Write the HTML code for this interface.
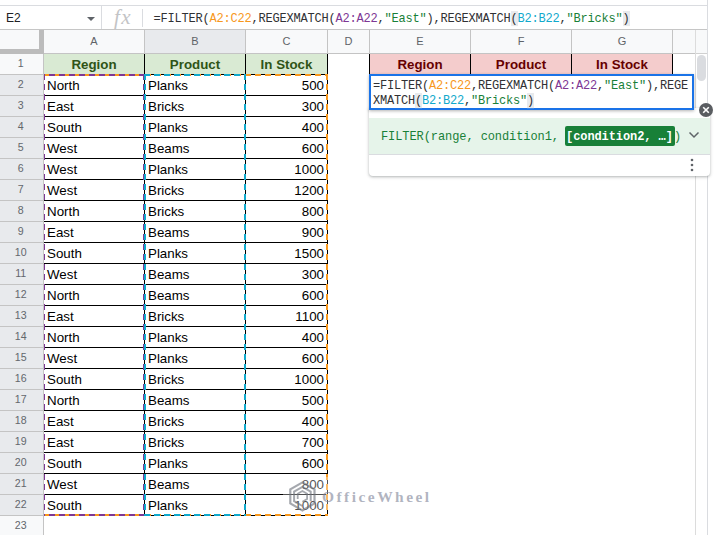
<!DOCTYPE html>
<html><head><meta charset="utf-8"><title>Sheet</title>
<style>
html,body{margin:0;padding:0;}
body{width:716px;height:535px;position:relative;overflow:hidden;background:#fff;font-family:"Liberation Sans",sans-serif;}
div,span{box-sizing:border-box;}
.a{position:absolute;}
.ln{position:absolute;background:#000;}
.g{position:absolute;background:#c4c4c4;}
.ch{position:absolute;top:30px;height:23px;font-size:11px;color:#5f6368;text-align:center;line-height:23px;background:#f8f9fa;}
.rh{position:absolute;left:0;width:43px;padding-right:1.5px;height:20px;font-size:10.6px;color:#63676c;text-align:center;line-height:19px;background:#e8eaed;}
.c{position:absolute;height:20px;font-size:13.33px;line-height:21px;color:#000;white-space:nowrap;}
.hd{font-weight:bold;text-align:center;font-size:13.33px;}
.mono{font-family:"Liberation Mono",monospace;white-space:pre;font-size:12px;letter-spacing:-0.2px;transform:scaleY(1.08);transform-origin:0 0;}
</style></head><body>

<div class="a" style="left:0;top:5px;width:707px;height:1px;background:#dadce0"></div>
<div class="a" style="left:6px;top:9px;font-size:12px;color:#202124;line-height:18px">E2</div>
<svg class="a" style="left:87px;top:17px" width="8" height="4"><path d="M0 0 L8 0 L4 4 Z" fill="#5f6368"/></svg>
<div class="a" style="left:101px;top:6px;width:1px;height:23px;background:#dadce0"></div>
<div class="a" style="left:114px;top:3.5px;font-family:'Liberation Serif',serif;font-style:italic;font-size:21px;color:#c3c4c6;line-height:26px;letter-spacing:1.5px">fx</div>
<div class="a" style="left:142px;top:9px;width:1px;height:18px;background:#dadce0"></div>
<div class="a mono" id="fb" style="left:153.4px;top:10.7px;line-height:15px;color:#303134">=FILTER(<span style="color:#f7981d">A2:C22</span>,REGEXMATCH(<span style="color:#7e3794">A2:A22</span>,<span style="color:#188038">"East"</span>),REGEXMATCH<span style="background:#e8eaed">(</span><span style="color:#11a9cc">B2:B22</span>,<span style="color:#188038">"Bricks"</span><span style="background:#e8eaed">)</span></div>
<div class="a" style="left:0;top:29px;width:707px;height:1px;background:#c6c6c6"></div>
<div class="a" style="left:0;top:30px;width:696px;height:23px;background:#f8f9fa"></div>
<div class="ch" style="left:44px;width:100px;background:#f8f9fa">A</div>
<div class="g" style="left:144px;top:30px;width:1px;height:23px"></div>
<div class="ch" style="left:145px;width:100px;background:#e8eaed">B</div>
<div class="g" style="left:245px;top:30px;width:1px;height:23px"></div>
<div class="ch" style="left:246px;width:81px;background:#f8f9fa">C</div>
<div class="g" style="left:327px;top:30px;width:1px;height:23px"></div>
<div class="ch" style="left:328px;width:41px;background:#f8f9fa">D</div>
<div class="g" style="left:369px;top:30px;width:1px;height:23px"></div>
<div class="ch" style="left:370px;width:100px;background:#f8f9fa">E</div>
<div class="g" style="left:470px;top:30px;width:1px;height:23px"></div>
<div class="ch" style="left:471px;width:100px;background:#f8f9fa">F</div>
<div class="g" style="left:571px;top:30px;width:1px;height:23px"></div>
<div class="ch" style="left:572px;width:100px;background:#f8f9fa">G</div>
<div class="g" style="left:672px;top:30px;width:1px;height:23px"></div>
<div class="ch" style="left:673px;width:22px;background:#f8f9fa"></div>
<div class="g" style="left:695px;top:30px;width:1px;height:23px"></div>
<div class="g" style="left:0;top:53px;width:696px;height:1px"></div>
<div class="a" style="left:39px;top:30px;width:5px;height:24px;background:#bcbcbc"></div>
<div class="a" style="left:0;top:49px;width:44px;height:5px;background:#bcbcbc"></div>
<div class="rh" style="top:54px;background:#f8f9fa">1</div>
<div class="g" style="left:0;top:74px;width:43px;height:1px"></div>
<div class="rh" style="top:75px;background:#e8eaed">2</div>
<div class="g" style="left:0;top:95px;width:43px;height:1px"></div>
<div class="rh" style="top:96px;background:#e8eaed">3</div>
<div class="g" style="left:0;top:116px;width:43px;height:1px"></div>
<div class="rh" style="top:117px;background:#e8eaed">4</div>
<div class="g" style="left:0;top:137px;width:43px;height:1px"></div>
<div class="rh" style="top:138px;background:#e8eaed">5</div>
<div class="g" style="left:0;top:158px;width:43px;height:1px"></div>
<div class="rh" style="top:159px;background:#e8eaed">6</div>
<div class="g" style="left:0;top:179px;width:43px;height:1px"></div>
<div class="rh" style="top:180px;background:#e8eaed">7</div>
<div class="g" style="left:0;top:200px;width:43px;height:1px"></div>
<div class="rh" style="top:201px;background:#e8eaed">8</div>
<div class="g" style="left:0;top:221px;width:43px;height:1px"></div>
<div class="rh" style="top:222px;background:#e8eaed">9</div>
<div class="g" style="left:0;top:242px;width:43px;height:1px"></div>
<div class="rh" style="top:243px;background:#e8eaed">10</div>
<div class="g" style="left:0;top:263px;width:43px;height:1px"></div>
<div class="rh" style="top:264px;background:#e8eaed">11</div>
<div class="g" style="left:0;top:284px;width:43px;height:1px"></div>
<div class="rh" style="top:285px;background:#e8eaed">12</div>
<div class="g" style="left:0;top:305px;width:43px;height:1px"></div>
<div class="rh" style="top:306px;background:#e8eaed">13</div>
<div class="g" style="left:0;top:326px;width:43px;height:1px"></div>
<div class="rh" style="top:327px;background:#e8eaed">14</div>
<div class="g" style="left:0;top:347px;width:43px;height:1px"></div>
<div class="rh" style="top:348px;background:#e8eaed">15</div>
<div class="g" style="left:0;top:368px;width:43px;height:1px"></div>
<div class="rh" style="top:369px;background:#e8eaed">16</div>
<div class="g" style="left:0;top:389px;width:43px;height:1px"></div>
<div class="rh" style="top:390px;background:#e8eaed">17</div>
<div class="g" style="left:0;top:410px;width:43px;height:1px"></div>
<div class="rh" style="top:411px;background:#e8eaed">18</div>
<div class="g" style="left:0;top:431px;width:43px;height:1px"></div>
<div class="rh" style="top:432px;background:#e8eaed">19</div>
<div class="g" style="left:0;top:452px;width:43px;height:1px"></div>
<div class="rh" style="top:453px;background:#e8eaed">20</div>
<div class="g" style="left:0;top:473px;width:43px;height:1px"></div>
<div class="rh" style="top:474px;background:#e8eaed">21</div>
<div class="g" style="left:0;top:494px;width:43px;height:1px"></div>
<div class="rh" style="top:495px;background:#e8eaed">22</div>
<div class="g" style="left:0;top:515px;width:43px;height:1px"></div>
<div class="rh" style="top:516px;background:#f8f9fa">23</div>
<div class="g" style="left:0;top:536px;width:43px;height:1px"></div>
<div class="g" style="left:43px;top:54px;width:1px;height:481px"></div>
<div class="c hd" style="left:44px;top:54px;width:100px;background:#d9ead3;color:#2f5417">Region</div>
<div class="c hd" style="left:145px;top:54px;width:100px;background:#d9ead3;color:#2f5417">Product</div>
<div class="c hd" style="left:246px;top:54px;width:81px;background:#d9ead3;color:#2f5417">In Stock</div>
<div class="c hd" style="left:370px;top:54px;width:100px;background:#f4cccc;color:#660000">Region</div>
<div class="c hd" style="left:471px;top:54px;width:100px;background:#f4cccc;color:#660000">Product</div>
<div class="c hd" style="left:572px;top:54px;width:100px;background:#f4cccc;color:#660000">In Stock</div>
<div class="c" style="left:44px;top:75px;width:100px;background:#fff;padding-left:3px">North</div>
<div class="c" style="left:145px;top:75px;width:100px;background:#fff;padding-left:3px">Planks</div>
<div class="c" style="left:246px;top:75px;width:81px;background:#fff;text-align:right;padding-right:3px">500</div>
<div class="c" style="left:44px;top:96px;width:100px;background:#fff;padding-left:3px">East</div>
<div class="c" style="left:145px;top:96px;width:100px;background:#fff;padding-left:3px">Bricks</div>
<div class="c" style="left:246px;top:96px;width:81px;background:#fff;text-align:right;padding-right:3px">300</div>
<div class="c" style="left:44px;top:117px;width:100px;background:#fff;padding-left:3px">South</div>
<div class="c" style="left:145px;top:117px;width:100px;background:#fff;padding-left:3px">Planks</div>
<div class="c" style="left:246px;top:117px;width:81px;background:#fff;text-align:right;padding-right:3px">400</div>
<div class="c" style="left:44px;top:138px;width:100px;background:#fff;padding-left:3px">West</div>
<div class="c" style="left:145px;top:138px;width:100px;background:#fff;padding-left:3px">Beams</div>
<div class="c" style="left:246px;top:138px;width:81px;background:#fff;text-align:right;padding-right:3px">600</div>
<div class="c" style="left:44px;top:159px;width:100px;background:#fff;padding-left:3px">West</div>
<div class="c" style="left:145px;top:159px;width:100px;background:#fff;padding-left:3px">Planks</div>
<div class="c" style="left:246px;top:159px;width:81px;background:#fff;text-align:right;padding-right:3px">1000</div>
<div class="c" style="left:44px;top:180px;width:100px;background:#fff;padding-left:3px">West</div>
<div class="c" style="left:145px;top:180px;width:100px;background:#fff;padding-left:3px">Bricks</div>
<div class="c" style="left:246px;top:180px;width:81px;background:#fff;text-align:right;padding-right:3px">1200</div>
<div class="c" style="left:44px;top:201px;width:100px;background:#fff;padding-left:3px">North</div>
<div class="c" style="left:145px;top:201px;width:100px;background:#fff;padding-left:3px">Bricks</div>
<div class="c" style="left:246px;top:201px;width:81px;background:#fff;text-align:right;padding-right:3px">800</div>
<div class="c" style="left:44px;top:222px;width:100px;background:#fff;padding-left:3px">East</div>
<div class="c" style="left:145px;top:222px;width:100px;background:#fff;padding-left:3px">Beams</div>
<div class="c" style="left:246px;top:222px;width:81px;background:#fff;text-align:right;padding-right:3px">900</div>
<div class="c" style="left:44px;top:243px;width:100px;background:#fff;padding-left:3px">South</div>
<div class="c" style="left:145px;top:243px;width:100px;background:#fff;padding-left:3px">Planks</div>
<div class="c" style="left:246px;top:243px;width:81px;background:#fff;text-align:right;padding-right:3px">1500</div>
<div class="c" style="left:44px;top:264px;width:100px;background:#fff;padding-left:3px">West</div>
<div class="c" style="left:145px;top:264px;width:100px;background:#fff;padding-left:3px">Beams</div>
<div class="c" style="left:246px;top:264px;width:81px;background:#fff;text-align:right;padding-right:3px">300</div>
<div class="c" style="left:44px;top:285px;width:100px;background:#fff;padding-left:3px">North</div>
<div class="c" style="left:145px;top:285px;width:100px;background:#fff;padding-left:3px">Beams</div>
<div class="c" style="left:246px;top:285px;width:81px;background:#fff;text-align:right;padding-right:3px">600</div>
<div class="c" style="left:44px;top:306px;width:100px;background:#fff;padding-left:3px">East</div>
<div class="c" style="left:145px;top:306px;width:100px;background:#fff;padding-left:3px">Bricks</div>
<div class="c" style="left:246px;top:306px;width:81px;background:#fff;text-align:right;padding-right:3px">1100</div>
<div class="c" style="left:44px;top:327px;width:100px;background:#fff;padding-left:3px">North</div>
<div class="c" style="left:145px;top:327px;width:100px;background:#fff;padding-left:3px">Planks</div>
<div class="c" style="left:246px;top:327px;width:81px;background:#fff;text-align:right;padding-right:3px">400</div>
<div class="c" style="left:44px;top:348px;width:100px;background:#fff;padding-left:3px">West</div>
<div class="c" style="left:145px;top:348px;width:100px;background:#fff;padding-left:3px">Planks</div>
<div class="c" style="left:246px;top:348px;width:81px;background:#fff;text-align:right;padding-right:3px">600</div>
<div class="c" style="left:44px;top:369px;width:100px;background:#fff;padding-left:3px">South</div>
<div class="c" style="left:145px;top:369px;width:100px;background:#fff;padding-left:3px">Bricks</div>
<div class="c" style="left:246px;top:369px;width:81px;background:#fff;text-align:right;padding-right:3px">1000</div>
<div class="c" style="left:44px;top:390px;width:100px;background:#fff;padding-left:3px">North</div>
<div class="c" style="left:145px;top:390px;width:100px;background:#fff;padding-left:3px">Beams</div>
<div class="c" style="left:246px;top:390px;width:81px;background:#fff;text-align:right;padding-right:3px">500</div>
<div class="c" style="left:44px;top:411px;width:100px;background:#fff;padding-left:3px">East</div>
<div class="c" style="left:145px;top:411px;width:100px;background:#fff;padding-left:3px">Bricks</div>
<div class="c" style="left:246px;top:411px;width:81px;background:#fff;text-align:right;padding-right:3px">400</div>
<div class="c" style="left:44px;top:432px;width:100px;background:#fff;padding-left:3px">East</div>
<div class="c" style="left:145px;top:432px;width:100px;background:#fff;padding-left:3px">Bricks</div>
<div class="c" style="left:246px;top:432px;width:81px;background:#fff;text-align:right;padding-right:3px">700</div>
<div class="c" style="left:44px;top:453px;width:100px;background:#fff;padding-left:3px">South</div>
<div class="c" style="left:145px;top:453px;width:100px;background:#fff;padding-left:3px">Planks</div>
<div class="c" style="left:246px;top:453px;width:81px;background:#fff;text-align:right;padding-right:3px">600</div>
<div class="c" style="left:44px;top:474px;width:100px;background:#fff;padding-left:3px">West</div>
<div class="c" style="left:145px;top:474px;width:100px;background:#fff;padding-left:3px">Beams</div>
<div class="c" style="left:246px;top:474px;width:81px;background:#fff;text-align:right;padding-right:3px">800</div>
<div class="c" style="left:44px;top:495px;width:100px;background:#fff;padding-left:3px">South</div>
<div class="c" style="left:145px;top:495px;width:100px;background:#fff;padding-left:3px">Planks</div>
<div class="c" style="left:246px;top:495px;width:81px;background:#fff;text-align:right;padding-right:3px">1000</div>
<div class="ln" style="left:44px;top:74px;width:284px;height:1px"></div>
<div class="ln" style="left:44px;top:95px;width:284px;height:1px"></div>
<div class="ln" style="left:44px;top:116px;width:284px;height:1px"></div>
<div class="ln" style="left:44px;top:137px;width:284px;height:1px"></div>
<div class="ln" style="left:44px;top:158px;width:284px;height:1px"></div>
<div class="ln" style="left:44px;top:179px;width:284px;height:1px"></div>
<div class="ln" style="left:44px;top:200px;width:284px;height:1px"></div>
<div class="ln" style="left:44px;top:221px;width:284px;height:1px"></div>
<div class="ln" style="left:44px;top:242px;width:284px;height:1px"></div>
<div class="ln" style="left:44px;top:263px;width:284px;height:1px"></div>
<div class="ln" style="left:44px;top:284px;width:284px;height:1px"></div>
<div class="ln" style="left:44px;top:305px;width:284px;height:1px"></div>
<div class="ln" style="left:44px;top:326px;width:284px;height:1px"></div>
<div class="ln" style="left:44px;top:347px;width:284px;height:1px"></div>
<div class="ln" style="left:44px;top:368px;width:284px;height:1px"></div>
<div class="ln" style="left:44px;top:389px;width:284px;height:1px"></div>
<div class="ln" style="left:44px;top:410px;width:284px;height:1px"></div>
<div class="ln" style="left:44px;top:431px;width:284px;height:1px"></div>
<div class="ln" style="left:44px;top:452px;width:284px;height:1px"></div>
<div class="ln" style="left:44px;top:473px;width:284px;height:1px"></div>
<div class="ln" style="left:44px;top:494px;width:284px;height:1px"></div>
<div class="ln" style="left:44px;top:515px;width:284px;height:1px"></div>
<div class="ln" style="left:144px;top:54px;width:1px;height:462px"></div>
<div class="ln" style="left:245px;top:54px;width:1px;height:462px"></div>
<div class="ln" style="left:327px;top:54px;width:1px;height:462px"></div>
<div class="ln" style="left:369px;top:54px;width:1px;height:21px"></div>
<div class="ln" style="left:470px;top:54px;width:1px;height:21px"></div>
<div class="ln" style="left:571px;top:54px;width:1px;height:21px"></div>
<div class="ln" style="left:672px;top:54px;width:1px;height:21px"></div>
<div class="ln" style="left:369px;top:74px;width:304px;height:1px"></div>
<svg class="a" style="left:0;top:0" width="716" height="535">
<g fill="none" stroke-width="2" stroke-dasharray="6 4">
<g stroke="#f7981d">
<path d="M45 75 H328"/><path d="M45 515 H328"/><path d="M327 74 V516"/>
</g>
<g stroke="#7e3794">
<path d="M145 75 H43"/><path d="M145 515 H43"/><path d="M44 74 V516"/><path d="M144 74 V516"/>
</g>
<g stroke="#11a9cc">
<path d="M144 75 H246"/><path d="M144 515 H246"/><path d="M145 74 V516"/><path d="M245 74 V516"/>
</g>
</g></svg>
<div class="g" style="left:43px;top:54px;width:1px;height:481px"></div>
<div class="a" style="left:696px;top:30px;width:20px;height:505px;background:#fff"></div>
<div class="a" style="left:696px;top:30px;width:11px;height:23px;background:#f8f9fa"></div>
<div class="a" style="left:695px;top:30px;width:1px;height:505px;background:#dcdcdc"></div>
<div class="a" style="left:696px;top:53px;width:11px;height:1px;background:#d0d0d0"></div>
<div class="a" style="left:707px;top:0px;width:1px;height:535px;background:#dadce0"></div>
<div class="a" style="left:697px;top:55px;width:9px;height:26px;background:#dadce0;border-radius:5px"></div>
<div class="a" style="left:369px;top:108px;width:341px;height:68px;background:#fff;border-radius:0 0 4px 4px;box-shadow:0 1px 3px 1px rgba(60,64,67,.15),0 1px 2px rgba(60,64,67,.2)"></div>
<div class="a" style="left:369px;top:118px;width:341px;height:36px;background:#e6f4ea"></div>
<div class="a" style="left:369px;top:154px;width:341px;height:1px;background:#dadce0"></div>
<div class="a" style="left:565px;top:126px;width:109.5px;height:20px;background:#188038;border-radius:2px"></div>
<div class="a mono" id="hp" style="left:381px;top:128.1px;letter-spacing:-0.085px;line-height:16.67px;color:#188038">FILTER(range, condition1, <span style="color:#fff;font-weight:bold;margin-right:1.2px">[condition2, …]</span>)</div>
<svg class="a" style="left:688px;top:131px" width="12" height="8"><path d="M1.5 1.5 L6 6 L10.5 1.5" fill="none" stroke="#5f6368" stroke-width="1.5"/></svg>
<svg class="a" style="left:689px;top:158px" width="6" height="14"><circle cx="3" cy="2" r="1.3" fill="#5f6368"/><circle cx="3" cy="7" r="1.3" fill="#5f6368"/><circle cx="3" cy="12" r="1.3" fill="#5f6368"/></svg>
<div class="a" style="left:369px;top:74px;width:325px;height:36px;background:#fff;border:2px solid #1a73e8;box-shadow:0 1px 3px rgba(0,0,0,.3)"></div>
<div class="a mono" id="ed" style="left:373px;top:78.8px;line-height:13.89px;color:#303134">=FILTER(<span style="color:#f7981d">A2:C22</span>,REGEXMATCH(<span style="color:#7e3794">A2:A22</span>,<span style="color:#188038">"East"</span>),REGE
XMATCH<span style="background:#e8eaed">(</span><span style="color:#11a9cc">B2:B22</span>,<span style="color:#188038">"Bricks"</span><span style="background:#e8eaed">)</span></div>
<svg class="a" style="left:698px;top:102px" width="16" height="16"><circle cx="8" cy="8" r="7" fill="#5a5d61"/><path d="M5.2 5.2 L10.8 10.8 M10.8 5.2 L5.2 10.8" stroke="#fff" stroke-width="1.6"/></svg>
<div class="a" style="left:283px;top:477px;width:150px;height:33px;background:rgba(255,255,255,.32)"></div>
<svg class="a" style="left:282px;top:476px" width="40" height="40"><g fill="none" stroke="rgba(110,114,125,.62)" stroke-linejoin="miter"><path d="M20.4 6.4 L32.5 13.4 L32.5 27.4 L20.4 34.4 L8.3 27.4 L8.3 13.4 Z" stroke-width="2.2"/><path d="M20.4 30.0 L12.1 25.2 L12.1 15.6 L20.4 10.8 L28.7 15.6 L28.7 25.2" stroke-width="2"/><path d="M15.7 23.1 L15.7 17.7 L20.4 15.0 L25.1 17.7 L25.1 23.1 L20.4 25.8" stroke-width="1.8"/></g></svg>
<div class="a" style="left:322px;top:487.5px;font-family:'Liberation Serif',serif;font-weight:bold;font-size:15.5px;letter-spacing:2.45px;color:rgba(125,130,150,.6);line-height:18px">OfficeWheel</div>
</body></html>
